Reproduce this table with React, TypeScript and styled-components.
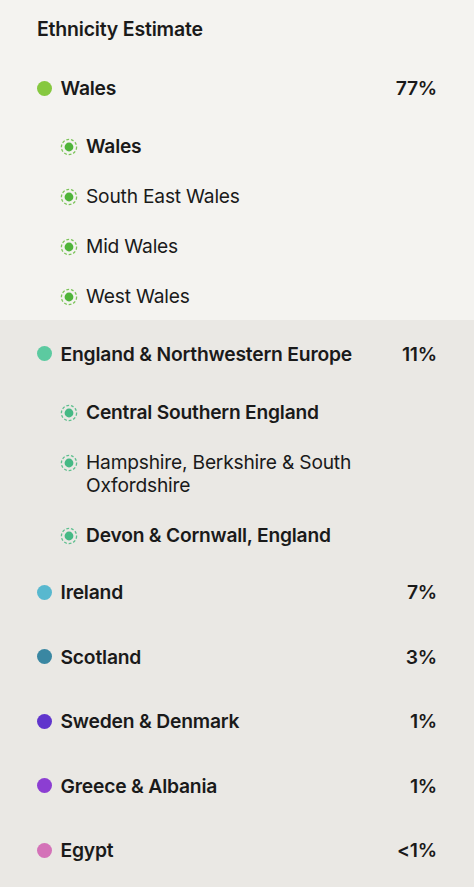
import React from "react";
import styled, { createGlobalStyle } from "styled-components";

const GlobalStyle = createGlobalStyle`
  html, body {
    margin: 0;
    padding: 0;
    background: #eae8e4;
  }

  body {
    font-family: Inter, "Liberation Sans", sans-serif;
    color: #1a1a1a;
    -webkit-font-smoothing: antialiased;
  }
`;

const Card = styled.div`
  width: 474px;
  min-height: 100vh;
  background: #eae8e4;
`;

const Title = styled.h2`
  margin: 0;
  padding: 17px 37px 13px;
  background: #f4f3f0;
  font-size: 19.5px;
  line-height: 24px;
  font-weight: 600;
  letter-spacing: -0.2px;
`;

const Group = styled.section<{ $highlighted?: boolean }>`
  padding: 22px 37px 11.5px;
  background: ${(p) => (p.$highlighted ? "#f4f3f0" : "#eae8e4")};
`;

const HeaderRow = styled.div`
  display: flex;
  align-items: center;
  height: 24px;
  padding-bottom: 7px;
  font-size: 19.3px;
  line-height: 24px;
  font-weight: 600;
  letter-spacing: -0.2px;
`;

const Dot = styled.span<{ $color: string }>`
  width: 15px;
  height: 15px;
  border-radius: 50%;
  background: ${(p) => p.$color};
  margin: 0 9px 0 -0.5px;
  flex-shrink: 0;
`;

const Name = styled.span`
  flex: 1;
`;

const Percent = styled.span`
  font-weight: 600;
`;

const SubList = styled.ul`
  list-style: none;
  margin: 28px 0 0;
  padding: 0 0 0 23px;
  display: flex;
  flex-direction: column;
  gap: 27px;
`;

const SubRow = styled.li<{ $strong?: boolean }>`
  display: flex;
  align-items: flex-start;
  font-size: 19.2px;
  line-height: 23px;
  font-weight: ${(p) => (p.$strong ? 600 : 400)};
  letter-spacing: -0.2px;
  max-width: 300px;

  svg {
    flex-shrink: 0;
    margin: 3px 8px 0 0;
  }
`;

type Sub = { name: string; strong?: boolean };

type Region = {
  name: string;
  percent: string;
  color: string;
  ring?: string;
  inner?: string;
  highlighted?: boolean;
  subs?: Sub[];
};

const regions: Region[] = [
  {
    name: "Wales",
    percent: "77%",
    color: "#86c840",
    ring: "#7cc45a",
    inner: "#4fb43a",
    highlighted: true,
    subs: [
      { name: "Wales", strong: true },
      { name: "South East Wales" },
      { name: "Mid Wales" },
      { name: "West Wales" },
    ],
  },
  {
    name: "England & Northwestern Europe",
    percent: "11%",
    color: "#5ccaa0",
    ring: "#5fbf8f",
    inner: "#45b985",
    subs: [
      { name: "Central Southern England", strong: true },
      { name: "Hampshire, Berkshire & South Oxfordshire" },
      { name: "Devon & Cornwall, England", strong: true },
    ],
  },
  { name: "Ireland", percent: "7%", color: "#58b8cf" },
  { name: "Scotland", percent: "3%", color: "#3a87a2" },
  { name: "Sweden & Denmark", percent: "1%", color: "#6035cc" },
  { name: "Greece & Albania", percent: "1%", color: "#8c3ed2" },
  { name: "Egypt", percent: "<1%", color: "#d472b8" },
];

const RingIcon = ({ ring, inner }: { ring: string; inner: string }) => (
  <svg width="18" height="18" viewBox="0 0 18 18">
    <circle
      cx="9"
      cy="9"
      r="7.6"
      fill="none"
      stroke={ring}
      strokeWidth="1.3"
      strokeDasharray="2.8 1.9"
    />
    <circle cx="9" cy="9" r="4.4" fill={inner} />
  </svg>
);

const App = () => {
  return (
    <>
      <GlobalStyle />
      <Card>
        <Title>Ethnicity Estimate</Title>
        {regions.map((region) => (
          <Group key={region.name} $highlighted={region.highlighted}>
            <HeaderRow>
              <Dot $color={region.color} />
              <Name>{region.name}</Name>
              <Percent>{region.percent}</Percent>
            </HeaderRow>
            {region.subs && (
              <SubList>
                {region.subs.map((sub) => (
                  <SubRow key={sub.name} $strong={sub.strong}>
                    <RingIcon ring={region.ring!} inner={region.inner!} />
                    <span>{sub.name}</span>
                  </SubRow>
                ))}
              </SubList>
            )}
          </Group>
        ))}
      </Card>
    </>
  );
};

export default App;
